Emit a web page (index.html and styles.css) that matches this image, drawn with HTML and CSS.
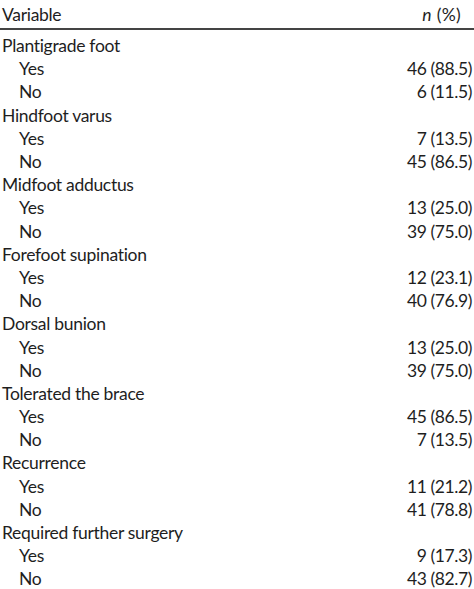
FILE: index.html
```html
<!DOCTYPE html>
<html>
<head>
<meta charset="utf-8">
<link rel="stylesheet" href="styles.css">
</head>
<body>
<div class="table">
  <div class="head">
    <span class="label">Variable</span>
    <span class="val"><i>n</i> (%)</span>
  </div>
  <div class="body">
    <div class="row group"><span class="label">Plantigrade foot</span></div>
    <div class="row"><span class="label sub">Yes</span><span class="val">46 (88.5)</span></div>
    <div class="row"><span class="label sub">No</span><span class="val">6 (11.5)</span></div>
    <div class="row group"><span class="label">Hindfoot varus</span></div>
    <div class="row"><span class="label sub">Yes</span><span class="val">7 (13.5)</span></div>
    <div class="row"><span class="label sub">No</span><span class="val">45 (86.5)</span></div>
    <div class="row group"><span class="label">Midfoot adductus</span></div>
    <div class="row"><span class="label sub">Yes</span><span class="val">13 (25.0)</span></div>
    <div class="row"><span class="label sub">No</span><span class="val">39 (75.0)</span></div>
    <div class="row group"><span class="label">Forefoot supination</span></div>
    <div class="row"><span class="label sub">Yes</span><span class="val">12 (23.1)</span></div>
    <div class="row"><span class="label sub">No</span><span class="val">40 (76.9)</span></div>
    <div class="row group"><span class="label">Dorsal bunion</span></div>
    <div class="row"><span class="label sub">Yes</span><span class="val">13 (25.0)</span></div>
    <div class="row"><span class="label sub">No</span><span class="val">39 (75.0)</span></div>
    <div class="row group"><span class="label">Tolerated the brace</span></div>
    <div class="row"><span class="label sub">Yes</span><span class="val">45 (86.5)</span></div>
    <div class="row"><span class="label sub">No</span><span class="val">7 (13.5)</span></div>
    <div class="row group"><span class="label">Recurrence</span></div>
    <div class="row"><span class="label sub">Yes</span><span class="val">11 (21.2)</span></div>
    <div class="row"><span class="label sub">No</span><span class="val">41 (78.8)</span></div>
    <div class="row group"><span class="label">Required further surgery</span></div>
    <div class="row"><span class="label sub">Yes</span><span class="val">9 (17.3)</span></div>
    <div class="row"><span class="label sub">No</span><span class="val">43 (82.7)</span></div>
  </div>
</div>
</body>
</html>
```
FILE: styles.css
```css
html, body {
  margin: 0;
  padding: 0;
  background: #ffffff;
}
body {
  width: 474px;
  height: 589px;
  overflow: hidden;
  font-family: "Lato", "Open Sans", sans-serif;
  font-size: 17.5px;
  color: #1e1e1e;
}
.table {
  display: flex;
  flex-direction: column;
}
.head {
  display: flex;
  justify-content: space-between;
  align-items: center;
  height: 28px;
  border-bottom: 2px solid #444444;
  padding: 0 13px 0 2px;
}
.head .val i {
  font-style: italic;
}
.body {
  padding-top: 4px;
  display: flex;
  flex-direction: column;
}
.row {
  display: flex;
  justify-content: space-between;
  align-items: center;
  height: 23.2px;
  padding: 0 2px 0 2px;
}
.sub {
  padding-left: 17px;
}
.val {
  white-space: nowrap;
  letter-spacing: -0.4px;
}
.head .val {
  letter-spacing: 0.3px;
}
.label {
  letter-spacing: -0.3px;
}
```
